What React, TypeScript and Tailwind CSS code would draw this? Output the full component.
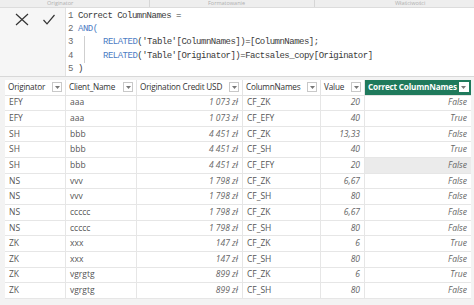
import React from 'react';

type Row = [string, string, string, string, string, string];

const rows: Row[] = [
  ['EFY', 'aaa', '1 073 zł', 'CF_ZK', '20', 'False'],
  ['EFY', 'aaa', '1 073 zł', 'CF_EFY', '40', 'True'],
  ['SH', 'bbb', '4 451 zł', 'CF_ZK', '13,33', 'False'],
  ['SH', 'bbb', '4 451 zł', 'CF_SH', '40', 'True'],
  ['SH', 'bbb', '4 451 zł', 'CF_EFY', '20', 'False'],
  ['NS', 'vvv', '1 798 zł', 'CF_ZK', '6,67', 'False'],
  ['NS', 'vvv', '1 798 zł', 'CF_SH', '80', 'False'],
  ['NS', 'ccccc', '1 798 zł', 'CF_ZK', '6,67', 'False'],
  ['NS', 'ccccc', '1 798 zł', 'CF_SH', '80', 'False'],
  ['ZK', 'xxx', '147 zł', 'CF_ZK', '6', 'True'],
  ['ZK', 'xxx', '147 zł', 'CF_SH', '80', 'False'],
  ['ZK', 'vgrgtg', '899 zł', 'CF_ZK', '6', 'True'],
  ['ZK', 'vgrgtg', '899 zł', 'CF_SH', '80', 'False'],
];

const cols = [
  { name: 'Originator', w: 'w-[61px]', num: false },
  { name: 'Client_Name', w: 'w-[71px]', num: false },
  { name: 'Origination Credit USD', w: 'w-[106px]', num: true },
  { name: 'ColumnNames', w: 'w-[78px]', num: false },
  { name: 'Value', w: 'w-[44px]', num: true },
  { name: 'Correct ColumnNames', w: 'w-[106px]', num: true },
];

const Drop = ({ on }: { on?: boolean }) => (
  <span
    className={
      'ml-auto flex h-[10px] w-[10px] shrink-0 items-center justify-center border ' +
      (on ? 'border-white bg-white' : 'border-[#c8c8c8] bg-white')
    }
  >
    <svg width="5" height="3" viewBox="0 0 5 3">
      <path d="M0 0h5L2.5 3z" fill="#777" />
    </svg>
  </span>
);

export default function App() {
  const kw = 'text-[#4d7cc4]';
  return (
    <div className="h-[305px] w-[474px] overflow-hidden bg-[#f3f3f3] font-['Open_Sans',sans-serif]">
      {/* strip of the pane above */}
      <div className="flex h-[8px] border-b border-[#dcdcdc] bg-[#eeeeee] text-[5.5px] leading-[7px] text-[#b0b0b0]">
        <div className="w-[150px] border-r border-[#d6d6d6] pl-[47px]">Originator</div>
        <div className="w-[165px] border-r border-[#d6d6d6] pl-[58px]">Formatowanie</div>
        <div className="flex-1 pl-[80px]">Właściwości</div>
      </div>

      {/* formula bar */}
      <div className="flex h-[69px] border-b border-[#d8d8d8] bg-white">
        <div className="flex w-[65px] items-start gap-[14px] bg-[#f6f6f6] pl-[15px] pt-[5px]">
          <svg width="14" height="13" viewBox="0 0 14 13">
            <path d="M1 1l12 11M13 1L1 12" stroke="#333" strokeWidth="1.2" fill="none" />
          </svg>
          <svg width="12" height="11" viewBox="0 0 12 11" className="mt-[1px]">
            <path d="M0.5 6l3.5 3.8L11.5 1" stroke="#333" strokeWidth="1.2" fill="none" />
          </svg>
        </div>
        <div className="flex-1 border-l border-[#e2e2e2] pt-[2px] font-['Liberation_Mono',monospace] text-[9px] leading-[13.2px] tracking-[-0.5px] text-[#3a3a3a]">
          {[
            <span key="1">Correct ColumnNames =</span>,
            <span key="2" className={kw}>AND(</span>,
            <span key="3" className="flex">
              <span className="ml-[6px] mr-[18px] border-l border-[#cfcfcf]" />
              <span>
                <span className={kw}>RELATED</span>('Table'[ColumnNames])=[ColumnNames];
              </span>
            </span>,
            <span key="4" className="flex">
              <span className="ml-[6px] mr-[18px] border-l border-[#cfcfcf]" />
              <span>
                <span className={kw}>RELATED</span>('Table'[Originator])=Factsales_copy[Originator]
              </span>
            </span>,
            <span key="5">)</span>,
          ].map((c, i) => (
            <div key={i} className="flex">
              <span className="w-[12px] pl-[2px] text-[#6a6a6a]">{i + 1}</span>
              <span>{c}</span>
            </div>
          ))}
        </div>
      </div>

      {/* table */}
      <div className="ml-[5px] mt-[3px] w-[466px] bg-white text-[8.5px] text-[#555]">
        <div className="flex h-[15.5px] border-b border-[#e3e3e3] text-[8.2px] tracking-[-0.2px]">
          {cols.map((c, i) => {
            const on = i === 5;
            return (
              <div
                key={c.name}
                className={
                  c.w +
                  ' flex items-center gap-[2px] px-[3px] ' +
                  (on ? 'bg-[#1f7a5c] font-bold text-white' : 'border-r border-[#e3e3e3] text-[#333]')
                }
              >
                <span className="whitespace-nowrap">{c.name}</span>
                <Drop on={on} />
              </div>
            );
          })}
        </div>
        {rows.map((r, ri) => (
          <div key={ri} className="flex h-[15.65px] border-b border-[#e6e6e6]">
            {r.map((v, ci) => {
              const c = cols[ci];
              const hi = ri === 4 && ci === 5;
              return (
                <div
                  key={ci}
                  className={
                    c.w +
                    ' flex items-center px-[4px] ' +
                    (c.num ? 'justify-end italic text-[#666] ' : '') +
                    (ci < 5 ? 'border-r border-[#e6e6e6] ' : '') +
                    (hi ? 'bg-[#ebebeb]' : '')
                  }
                >
                  {v}
                </div>
              );
            })}
          </div>
        ))}
      </div>
    </div>
  );
}
